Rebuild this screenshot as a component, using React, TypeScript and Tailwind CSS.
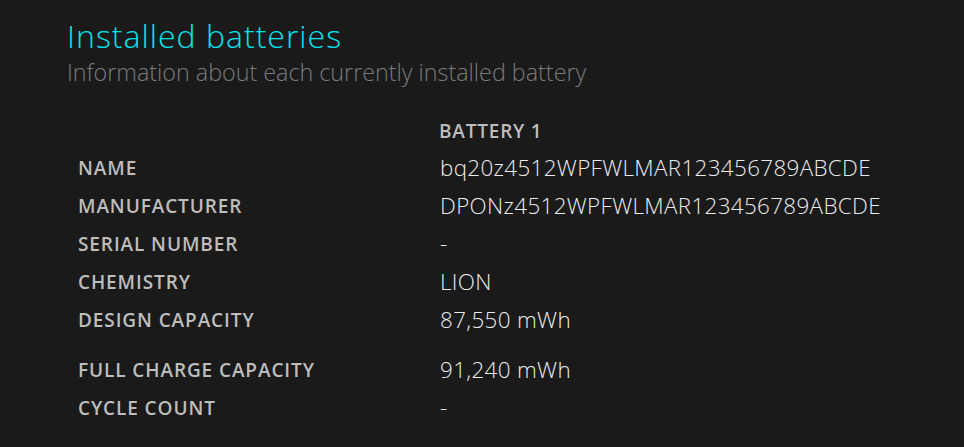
import React from "react";

const rows1: [string, string][] = [
  ["NAME", "bq20z4512WPFWLMAR123456789ABCDE"],
  ["MANUFACTURER", "DPONz4512WPFWLMAR123456789ABCDE"],
  ["SERIAL NUMBER", "-"],
  ["CHEMISTRY", "LION"],
  ["DESIGN CAPACITY", "87,550 mWh"],
];
const rows2: [string, string][] = [
  ["FULL CHARGE CAPACITY", "91,240 mWh"],
  ["CYCLE COUNT", "-"],
];

function Row({ label, value }: { label: string; value: string }) {
  return (
    <div className="flex h-[38px] items-center">
      <div className="w-[373px] pl-[11px] text-[19px] font-semibold tracking-[0.9px] text-[#bdbdbd]">{label}</div>
      <div className="text-[22.4px] font-light tracking-[0.35px] text-[#ececec]">{value}</div>
    </div>
  );
}

export default function App() {
  return (
    <div
      className="h-[447px] w-[964px] overflow-hidden bg-[#1a1a1a] pl-[67px] pt-[15px]"
      style={{ fontFamily: '"Open Sans", "Noto Sans", sans-serif' }}
    >
      <h1 className="text-[32px] font-light leading-[42px] tracking-[1px] text-[#05e2ec]">Installed batteries</h1>
      <p className="text-[23.3px] font-light leading-[30px] text-[#7a7a7a]">Information about each currently installed battery</p>
      <div className="mt-[27px] flex h-[35px] items-center pl-[372px] text-[19px] font-semibold tracking-[0.8px] text-[#bdbdbd]">BATTERY 1</div>
      <div className="flex flex-col">
        {rows1.map(([l, v]) => (
          <Row key={l} label={l} value={v} />
        ))}
      </div>
      <div className="mt-[12px] flex flex-col">
        {rows2.map(([l, v]) => (
          <Row key={l} label={l} value={v} />
        ))}
      </div>
    </div>
  );
}
